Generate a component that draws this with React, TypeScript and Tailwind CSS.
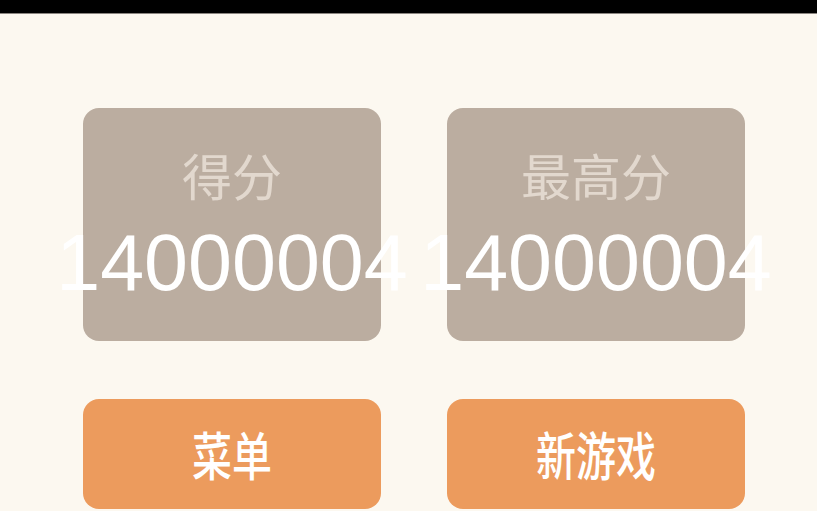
export default function App() {
  const score = 14000004;
  const best = 14000004;

  return (
    <div className="w-[817px] h-[511px] overflow-hidden bg-[#fcf8f0] flex flex-col">
      <div className="h-[14px] bg-black border-b border-[#8a8580] shrink-0" />

      <div className="flex gap-[66px] pl-[83px] mt-[94px]">
        <ScoreBox label="得分" value={score} />
        <ScoreBox label="最高分" value={best} />
      </div>

      <div className="flex gap-[66px] pl-[83px] mt-[58px]">
        <ActionButton text="菜单" />
        <ActionButton text="新游戏" />
      </div>
    </div>
  );
}

function ScoreBox({ label, value }: { label: string; value: number }) {
  return (
    <div className="w-[298px] h-[233px] rounded-[16px] bg-[#bbada0] flex flex-col items-center pt-[41px]">
      <div className="text-[50px] leading-none text-[#e2d8ce] font-['Noto_Sans_CJK_SC',sans-serif]">
        {label}
      </div>
      <div className="w-full flex justify-center mt-[24px]">
        <span className="whitespace-nowrap text-[79px] leading-none text-white font-['Liberation_Sans',Arial,sans-serif]">
          {value}
        </span>
      </div>
    </div>
  );
}

function ActionButton({ text }: { text: string }) {
  return (
    <button className="w-[298px] h-[110px] rounded-[16px] bg-[#ec9b5d] flex items-center justify-center">
      <span className="inline-block scale-y-[1.3] text-[40px] leading-none text-white font-medium font-['Noto_Sans_CJK_SC',sans-serif]">
        {text}
      </span>
    </button>
  );
}
